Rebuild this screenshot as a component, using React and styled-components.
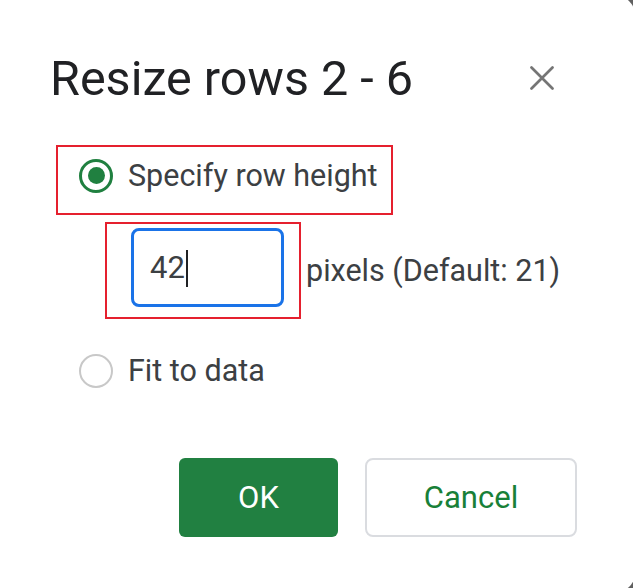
import React from "react";
import styled, { createGlobalStyle } from "styled-components";

const GlobalStyle = createGlobalStyle`
  html, body {
    margin: 0;
    padding: 0;
    background: #606060;
    overflow: hidden;
  }

  body {
    font-family: Roboto, "Noto Sans", Arial, sans-serif;
  }
`;

const Dialog = styled.div`
  box-sizing: border-box;
  display: flex;
  flex-direction: column;
  width: 636px;
  height: 600px;
  margin-top: -6px;
  padding: 57px 59px 0 50px;
  background: #ffffff;
  border-radius: 0 24px 24px 0;
`;

const Header = styled.div`
  display: flex;
  flex-direction: row;
  align-items: center;
  justify-content: space-between;
`;

const Title = styled.h1`
  margin: 0;
  font-size: 48.5px;
  line-height: 56px;
  font-weight: 400;
  color: #202124;
`;

const CloseButton = styled.button`
  display: flex;
  align-items: center;
  justify-content: center;
  width: 24px;
  height: 24px;
  margin: -3px 23px 0 0;
  padding: 0;
  border: none;
  background: none;
  cursor: pointer;
`;

/* red annotation boxes round the changed controls */
const Highlight = styled.div`
  box-sizing: border-box;
  display: flex;
  flex-direction: row;
  align-items: ${(p) => (p.$top ? "flex-start" : "center")};
  width: ${(p) => p.$w}px;
  height: ${(p) => p.$h}px;
  padding: ${(p) => p.$pad};
  border: 2px solid #e5202e;
`;

const OptionRow = styled.label`
  display: flex;
  flex-direction: row;
  align-items: center;
  gap: 15px;
  font-size: 30.5px;
  color: #3c4043;
  cursor: pointer;
`;

const Radio = styled.span`
  box-sizing: border-box;
  display: flex;
  align-items: center;
  justify-content: center;
  flex: none;
  width: 34px;
  height: 34px;
  border-radius: 50%;
  border: ${(p) => (p.$checked ? "3.5px solid #208040" : "2.5px solid #c8c8c8")};

  &::after {
    content: "";
    display: ${(p) => (p.$checked ? "block" : "none")};
    width: 17px;
    height: 17px;
    border-radius: 50%;
    background: #208040;
  }
`;

const FirstOption = styled.div`
  margin: 38px 0 0 6px;
`;

const HeightRow = styled.div`
  display: flex;
  flex-direction: row;
  align-items: center;
  gap: 5px;
  margin: 7px 0 0 55px;
`;

const PixelInput = styled.div`
  box-sizing: border-box;
  display: flex;
  align-items: center;
  width: 153px;
  height: 79px;
  padding-left: 16px;
  border: 3px solid #1a73e8;
  border-radius: 8px;
  font-size: 31px;
  color: #3c4043;
`;

const Caret = styled.span`
  display: inline-block;
  width: 2px;
  height: 37px;
  margin: 2px 0 0 1px;
  background: #202124;
`;

const Hint = styled.span`
  font-size: 30.5px;
  color: #3c4043;
`;

const SecondOption = styled.div`
  margin: 34px 0 0 29px;
`;

const Actions = styled.div`
  display: flex;
  flex-direction: row;
  justify-content: flex-end;
  gap: 27px;
  margin-top: 70px;
`;

const Button = styled.button`
  box-sizing: border-box;
  width: ${(p) => (p.$primary ? 159 : 212)}px;
  height: 79px;
  border-radius: ${(p) => (p.$primary ? 6 : 8)}px;
  border: ${(p) => (p.$primary ? "none" : "2px solid #dadce0")};
  background: ${(p) => (p.$primary ? "#218041" : "#ffffff")};
  color: ${(p) => (p.$primary ? "#ffffff" : "#188038")};
  font-family: Roboto, "Noto Sans", Arial, sans-serif;
  font-size: 31px;
  font-weight: 400;
  cursor: pointer;
`;

export default function App() {
  return (
    <>
      <GlobalStyle />
      <Dialog>
        <Header>
          <Title>Resize rows 2 - 6</Title>
          <CloseButton type="button" aria-label="Close">
            <svg width="24" height="24" viewBox="0 0 24 24">
              <path d="M1.5 1.5L22.5 22.5M22.5 1.5L1.5 22.5" stroke="#757575" strokeWidth="2.7" strokeLinecap="round" />
            </svg>
          </CloseButton>
        </Header>

        <FirstOption>
          <Highlight $w={337} $h={70} $pad="11px 0 0 21px" $top>
            <OptionRow>
              <Radio $checked />
              Specify row height
            </OptionRow>
          </Highlight>
        </FirstOption>

        <HeightRow>
          <Highlight $w={196} $h={97} $pad="4px 0 0 24px" $top>
            <PixelInput>
              42
              <Caret />
            </PixelInput>
          </Highlight>
          <Hint>pixels (Default: 21)</Hint>
        </HeightRow>

        <SecondOption>
          <OptionRow>
            <Radio />
            Fit to data
          </OptionRow>
        </SecondOption>

        <Actions>
          <Button type="button" $primary>
            OK
          </Button>
          <Button type="button">Cancel</Button>
        </Actions>
      </Dialog>
    </>
  );
}
